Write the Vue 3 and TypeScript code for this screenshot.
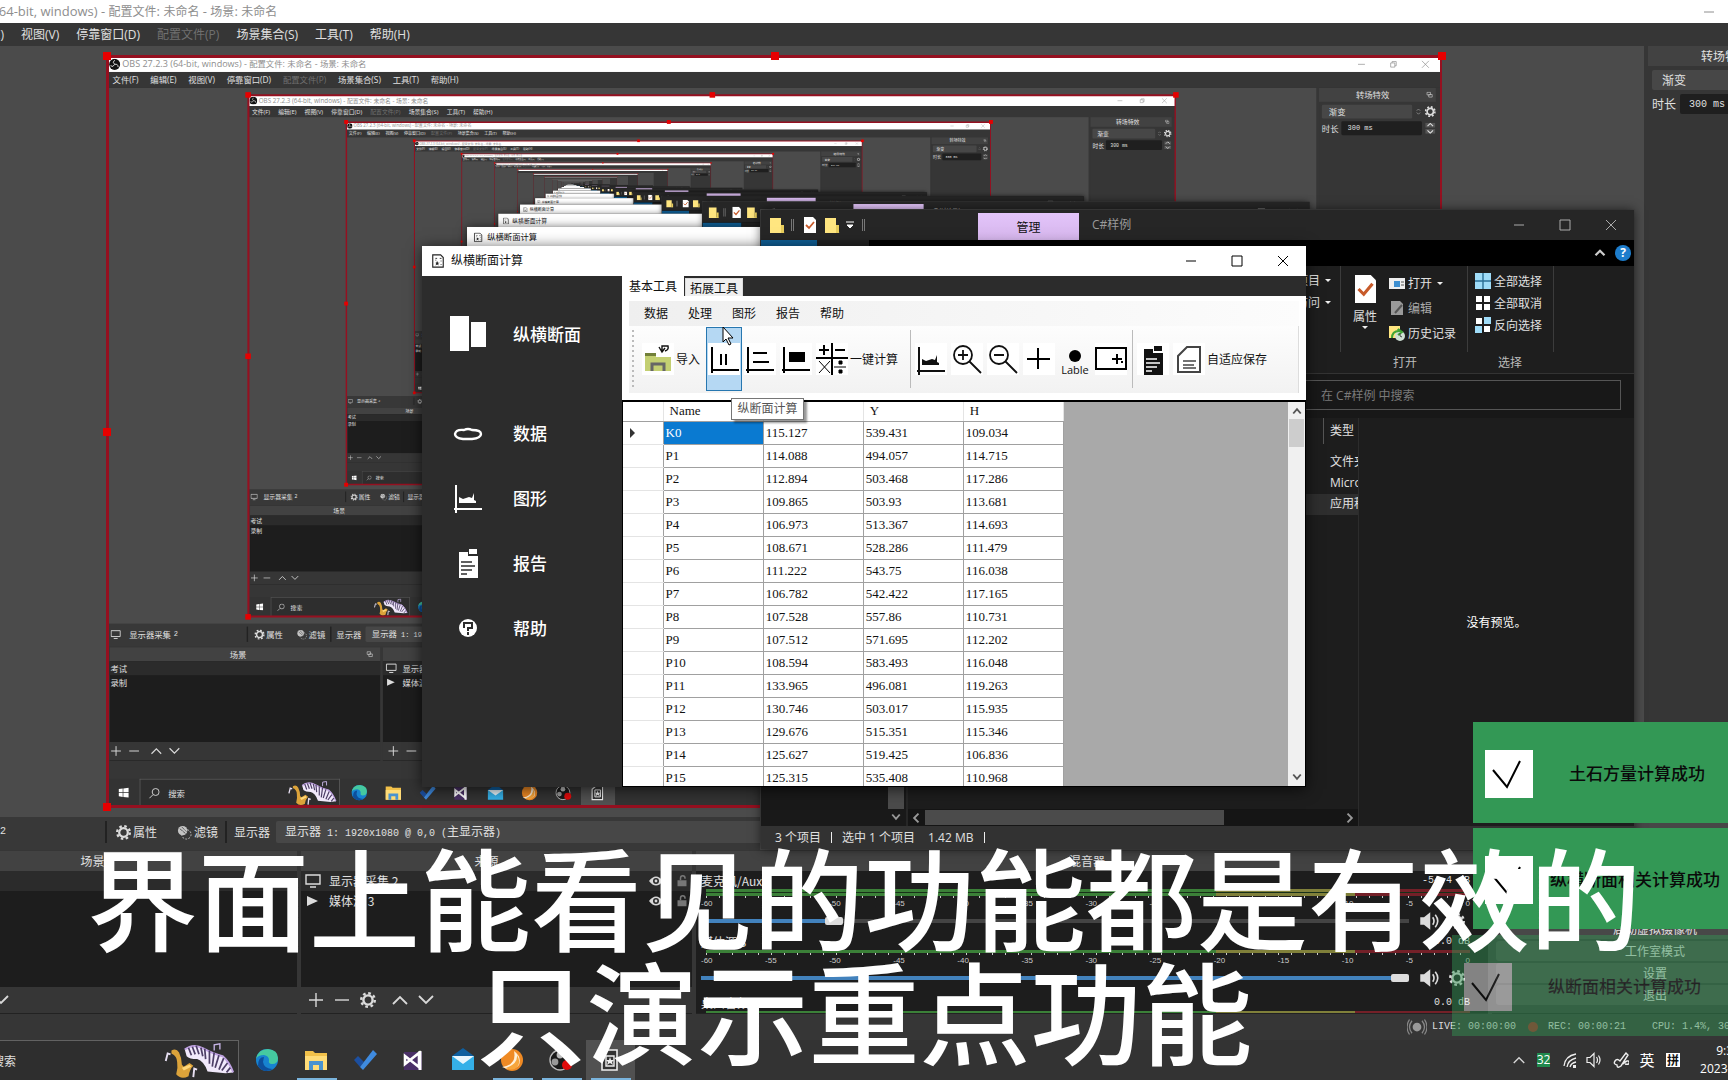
<script setup lang="ts">
import { computed } from 'vue'

const props = withDefaults(defineProps<{ depth?: number }>(), { depth: 0 })
const MAX_DEPTH = 13
// below this depth the captured screens are too small to carry captions
const TEXT_DEPTH = 7
const live = computed(() => props.depth === 0)
const legible = computed(() => props.depth < TEXT_DEPTH)

const menus = ['文件(F)', '编辑(E)', '视图(V)', '停靠窗口(D)', '配置文件(P)', '场景集合(S)', '工具(T)', '帮助(H)']
const points: string[][] = [
  ['K0', '115.127', '539.431', '109.034'],
  ['P1', '114.088', '494.057', '114.715'],
  ['P2', '112.894', '503.468', '117.286'],
  ['P3', '109.865', '503.93', '113.681'],
  ['P4', '106.973', '513.367', '114.693'],
  ['P5', '108.671', '528.286', '111.479'],
  ['P6', '111.222', '543.75', '116.038'],
  ['P7', '106.782', '542.422', '117.165'],
  ['P8', '107.528', '557.86', '110.731'],
  ['P9', '107.512', '571.695', '112.202'],
  ['P10', '108.594', '583.493', '116.048'],
  ['P11', '133.965', '496.081', '119.263'],
  ['P12', '130.746', '503.017', '115.935'],
  ['P13', '129.676', '515.351', '115.346'],
  ['P14', '125.627', '519.425', '106.836'],
  ['P15', '125.315', '535.408', '110.968'],
]
const scale = ['-60', '-55', '-50', '-45', '-40', '-35', '-30', '-25', '-20', '-15', '-10', '-5', '0']
const mixers = [
  { name: '麦克风/Aux', db: '-54.4 dB', value: 18, twin: true },
  { name: '媒体源 3', db: '0.0 dB', value: 100, twin: false },
  { name: '桌面音频', db: '0.0 dB', value: 100, twin: false },
]
const handles = ['tl', 'tc', 'tr', 'ml', 'mr', 'bl', 'bc', 'br']

const chartArt = '<path d="M4 4v28M2 28h28" stroke="currentColor" stroke-width="2"/><path d="M7 22v-6l4 2 6-2 3 1 2-5v7l2 1v2z" fill="currentColor"/>'
const clipArt = '<path d="M7 6h9v4h10v22H7z" fill="currentColor"/><path d="M17 3h8v5h-8z" fill="currentColor"/>'
const art: Record<string, string> = {
  gear: '<g fill="none" stroke="#dcdcdc"><circle cx="8" cy="8" r="4.6" stroke-width="2.4"/><circle cx="8" cy="8" r="6.8" stroke-width="2.4" stroke-dasharray="2.67 2.67"/></g>',
  monitor: '<path d="M1 2h14v9H1zM5 14h6" fill="none" stroke="#dcdcdc" stroke-width="1.4"/>',
  play: '<path d="M2 3l11 5-11 5z" fill="#dcdcdc"/>',
  filter: '<circle cx="6" cy="6" r="5" fill="#c4c4c4"/><path d="M3 4l6 5M5 2l5 5" stroke="#555"/><circle cx="10" cy="10" r="5" fill="none" stroke="#c4c4c4" stroke-dasharray="2 1.4"/>',
  plus: '<path d="M8 1v14M1 8h14" stroke="#d8d8d8" stroke-width="1.4"/>',
  minus: '<path d="M1 8h14" stroke="#d8d8d8" stroke-width="1.4"/>',
  up: '<path d="M1 12l7-7 7 7" fill="none" stroke="#d8d8d8" stroke-width="1.8"/>',
  down: '<path d="M1 4l7 7 7-7" fill="none" stroke="#d8d8d8" stroke-width="1.8"/>',
  eye: '<path d="M1 8q7-9 14 0q-7 9-14 0z" fill="#d8d8d8"/><circle cx="8" cy="8" r="3" fill="#2b2b2b"/><circle cx="8" cy="8" r="1.4" fill="#d8d8d8"/>',
  lock: '<path d="M2 7h12v8H2z" fill="#777"/><path d="M6 7V4q0-3 3-3t3 3v1" fill="none" stroke="#777" stroke-width="2"/>',
  speaker: '<path d="M1 5h3l5-4v14l-5-4H1z" fill="#dcdcdc"/><path d="M11 5q2 3 0 6M13 3q4 5 0 10" fill="none" stroke="#dcdcdc" stroke-width="1.3"/>',
  volume: '<path d="M1 5.500h3l4-4v13l-4-4H1z" fill="none" stroke="#eee" stroke-width="1.2"/><path d="M10.500 5q2 3 0 6M12.500 3.500q3 4.500 0 9" fill="none" stroke="#eee" stroke-width="1.2"/>',
  popout: '<path d="M2 2h8v6H2zM6 7h8v6H6z" fill="#404040" stroke="#ccc" stroke-width="1.5"/>',
  cast: '<circle cx="8" cy="8" r="3.5" fill="#999"/><path d="M4 3q-4 5 0 10M12 3q4 5 0 10M2 2q-4 6 0 12M14 2q4 6 0 12" fill="none" stroke="#888"/>',
  edge: '<circle cx="12" cy="12" r="11" fill="#1783d0"/><path d="M1 11Q3 1 13 1q10 1 10 9 0 6-6 6-4 0-3-4 0-4-5-5-6 0-8 4z" fill="#45c9a0"/><path d="M8 14q1 7 10 7-10 5-15-3Q3 9 9 9z" fill="#0d4f9c"/>',
  folder: '<path d="M1 3h8l2 2h12v17H1z" fill="#f2c14a"/><path d="M1 8h22v14H1z" fill="#ffdc78"/><path d="M5 22v-9h14v9h-4v-5H9v5z" fill="#4a93cf"/>',
  todo: '<path d="M1 12l4-4 6 6-4 5z" fill="#1c4fa0"/><path d="M7 19L20 2l4 4L10 22z" fill="#3f8be0"/>',
  vs: '<path d="M2 4h18v18H2z" fill="#5c2d91" opacity=".55"/><path d="M3 8l14 11V5L3 16z" fill="none" stroke="#fff" stroke-width="2.6"/><path d="M18 3v19" stroke="#fff" stroke-width="3"/>',
  mail: '<path d="M1 8L12 0l11 8z" fill="#0f5f9f"/><path d="M1 8h22v14H1z" fill="#35b0e8"/><path d="M1 8l11 8 11-8z" fill="#e9f6fd"/>',
  ball: '<circle cx="12" cy="12" r="11" fill="#ef8a24"/><path d="M2 19Q17 17 14 3q8 6 5 14-6 7-17 2z" fill="#fff0d8"/><path d="M6 20q12-4 11-13 5 8-1 13-5 3-10 0z" fill="#f7a63c"/>',
  obs: '<circle cx="11" cy="12" r="10" fill="#1a1a1a" stroke="#bbb" stroke-width="1.4"/><circle cx="11" cy="7" r="3.4" fill="#bbb"/><circle cx="6" cy="14" r="3.4" fill="#999"/><circle cx="18" cy="17" r="5" fill="#e00b0b"/>',
  calc: '<path d="M4 7l6-5h9v20H4z" fill="#333" stroke="#eee" stroke-width="1.6"/><path d="M8 8h8v10H8z" fill="none" stroke="#eee" stroke-width="1.4"/><path d="M12 9l1 3h3l-2 2 1 3-3-2-3 2 1-3-2-2h3z" fill="#eee"/>',
  winlogo: '<path d="M1 3l6-1v6H1zM8 2l8-1v7H8zM1 9h6v6l-6-1zM8 9h8v7l-8-1z" fill="#fff"/>',
  search: '<circle cx="10" cy="6" r="5" fill="none" stroke="#ddd" stroke-width="1.3"/><path d="M6 10l-5 5" stroke="#ddd" stroke-width="1.3"/>',
  import: '<path d="M3 10h11v4h15v14H3z" fill="#c3cf72"/><path d="M3 10h11v3H3z" fill="#72803a"/><path d="M10 28v-7h12v7" fill="none" stroke="#666" stroke-width="3"/><path d="M17 4l3 5 3-4M20 8V3h6q1 4-3 5" fill="none" stroke="#111" stroke-width="1.4"/>',
  vert: '<path d="M4 4v26M3 27h28" stroke="#000" stroke-width="2"/><path d="M13 11v11M18 11v11" stroke="#000" stroke-width="2"/>',
  horiz: '<path d="M4 4v26M2 27h28" stroke="#000" stroke-width="2"/><path d="M9 10h14M9 19h16" stroke="#000" stroke-width="2"/>',
  block: '<path d="M4 4v26M2 27h28" stroke="#000" stroke-width="2"/><path d="M9 9h16v10H9z" fill="#000"/>',
  ops: '<path d="M16 0v32M0 15h32M8 2v10M3 7h10M19 7h10" stroke="#000" stroke-width="2"/><path d="M3 18l11 12M14 18L3 30" stroke="#000"/><path d="M18 24h12M23 18h3v3h-3zM23 27h3v3h-3z" stroke="#000" fill="#000"/>',
  chart: chartArt,
  zin: '<circle cx="12" cy="12" r="9" fill="none" stroke="#111" stroke-width="1.8"/><path d="M18 18l12 12M12 7v10M7 12h10" stroke="#111" stroke-width="1.8"/>',
  zout: '<circle cx="12" cy="12" r="9" fill="none" stroke="#111" stroke-width="1.8"/><path d="M18 18l12 12M7 12h10" stroke="#111" stroke-width="1.8"/>',
  cross: '<path d="M15 5v21M4 16h23" stroke="#000" stroke-width="2"/>',
  card: '<path d="M1 5h30v21H1z" fill="#fff" stroke="#000" stroke-width="2"/><path d="M22 11v10M17 16h10" stroke="#000" stroke-width="2"/><path d="M26 18h2v2h-2z"/>',
  clip: clipArt + '<path d="M9 16h11M9 20h14M9 24h11M9 28h6" stroke="#fff" stroke-width="1.6"/>',
  doc: '<path d="M5 29V13l9-9h13v25z" fill="#fff" stroke="#444" stroke-width="2"/><path d="M10 18h13M10 22h11M10 25h13" stroke="#444" stroke-width="1.6"/>',
  sidebook: '<path d="M0 0h19v35H0zM21 6h15v25H21z" fill="#fff"/>',
  sidedata: '<path d="M3 18q1-5 9-4 4-2 8 0 9 0 9 4t-9 5H11q-8-1-8-5z" fill="none" stroke="#fff" stroke-width="2.4"/>',
  sidehelp: '<circle cx="16" cy="17" r="9" fill="#fff"/><path d="M12 17v-5h8v5h-4v3M16 21v3" fill="none" stroke="#2c2c2c" stroke-width="2"/>',
  sideclip: clipArt + '<path d="M9 16h11M9 20h14M9 24h11M9 28h6" stroke="#2c2c2c" stroke-width="1.6"/>',
  check: '<path d="M8 20l14 17L35 11" fill="none" stroke="#000" stroke-width="2"/>',
  yfolder: '<path d="M1 1h11v14l4 1H1z" fill="#ffe680"/><path d="M12 8h3v8h-3z" fill="#e8cd5c"/>',
  pagecheck: '<path d="M2 0h9l3 3v13H2z" fill="#fff"/><path d="M4 8l3 3 5-6" fill="none" stroke="#c75a2a" stroke-width="1.8"/>',
  openwin: '<path d="M0 3h16v11H0z" fill="#eee"/><path d="M5 6h6v6H5z" fill="#3e8fd0"/><path d="M12 7h3M12 10h3" stroke="#555"/>',
  edit: '<path d="M2 1h9l3 3v11H2z" fill="#9a9a9a"/><path d="M6 13l7-8" stroke="#555" stroke-width="2"/>',
  history: '<path d="M0 1h11v12H0z" fill="#ffe680"/><circle cx="11" cy="11" r="5" fill="#cfe0d4"/><path d="M3 13q0-7 7-7l-1-2 4 3-4 3" fill="none" stroke="#3fa535" stroke-width="2"/><path d="M11 8v3l2 1" stroke="#444" fill="none"/>',
  selall: '<path d="M0 0h16v16H0z" fill="#9fdcf8"/><path d="M8 0v16M0 8h16" stroke="#2b6f95" stroke-width="1.4"/>',
  selnone: '<path d="M1 1h6v6H1zM9 1h6v6H9zM1 9h6v6H1zM9 9h6v6H9z" fill="#fff"/>',
  selinv: '<path d="M1 1h6v6H1zM9 9h6v6H9z" fill="#fff"/><path d="M9 0h7v7H9zM0 9h7v7H0z" fill="#9fdcf8"/>',
  wifi: '<path d="M3 14Q4 4 15 2M6 15q1-7 9-9M9 15q1-4 6-5" fill="none" stroke="#eee" stroke-width="1.3"/><path d="M12 13h3v3h-3z" fill="#eee"/>',
  pen: '<path d="M4 13q-4-1-2-4t5 0l6-8 2 2-7 11q-4 3-4-1zM10 12q5-5 6-2t-4 2" fill="none" stroke="#eee" stroke-width="1.4"/>',
  file: '<path d="M2 1h9l3 3v11H2z" fill="#fff" stroke="#222" stroke-width="1.3"/><path d="M5 5h2M10 5h2M5 7h1M11 8h1M11 12h1" stroke="#222"/><path d="M7 8l1 2h2l-2 1 1 2-2-1-2 1 1-2-1-1h1z" fill="#222"/>',
  music: '<path d="M8 9q5-3 8 2 3 6 3 13l2 2 6-4 4 3q-4 4-5 11-8 4-13-2 2-7 1-13 0-6-6-9z" fill="#dca33a"/><path d="M19 27l8-3 2 2-8 4z" fill="#ffd77a"/><path d="M2 20l2-8 3 1M31 37l1-9 3 1" fill="none" stroke="#e7dff2" stroke-width="2"/><path d="M22 8q9-7 20-1t20 8q7 6 11 17l-8 1-19-2q-4-11-11-13-8 0-11-3z" fill="#f1e9fb"/><path d="M22 8q9-7 20-1t20 8q7 6 11 17" fill="none" stroke="#c0a3e2" stroke-width="2"/><path d="M26 6l3 8M30 5l3 8M34 4l3 9M39 6l2 9M43 7l1 11M48 9l0 14M53 11l-2 15M58 14l-4 13M63 17l-5 12M67 22l-6 8M70 27l-4 5" stroke="#4d3f66" stroke-width="1.8"/><path d="M53 9V3l6-1v6" fill="none" stroke="#c7b4e6" stroke-width="1.4"/>',
}
const apps = [
  { icon: 'edge', name: 'Edge', on: false },
  { icon: 'folder', name: '资源管理器', on: true },
  { icon: 'todo', name: 'To Do', on: false },
  { icon: 'vs', name: 'Visual Studio', on: false },
  { icon: 'mail', name: '邮件', on: false },
  { icon: 'ball', name: '浏览器', on: true },
  { icon: 'obs', name: 'OBS', on: true },
  { icon: 'calc', name: '纵横断面计算', on: true },
]
const sideItems = [
  { icon: 'sidedata', label: '数据' },
  { icon: 'chart', label: '图形' },
  { icon: 'sideclip', label: '报告' },
  { icon: 'sidehelp', label: '帮助' },
]
</script>

<template>
  <div :class="live ? 'viewport' : 'nested'">
    <div class="desktop">
      <header class="obs-title">
        <svg class="i16" viewBox="0 0 16 16"><circle cx="8" cy="8" r="8" fill="#111" /><path d="M8 8q-4-3 0-6M8 8q5-1 5 4M8 8q-2 5-6 2" fill="none" stroke="#ddd" stroke-width="1.4" /></svg>
        <div v-if="legible" class="caption">OBS 27.2.3 (64-bit, windows) - <span>配置文件</span>: <span>未命名</span> - <span>场景</span>: <span>未命名</span></div>
        <div class="winctl">
          <button aria-label="最小化"><svg viewBox="0 0 10 10"><path d="M0 5h10" /></svg></button>
          <button aria-label="还原"><svg viewBox="0 0 10 10"><path d="M1 3h6v6H1zM3 3V1h6v6H7" /></svg></button>
          <button aria-label="关闭"><svg viewBox="0 0 10 10"><path d="M0 0l10 10M10 0L0 10" /></svg></button>
        </div>
      </header>
      <nav class="obs-menu">
        <template v-if="legible"><button v-for="m in menus" :key="m" :disabled="m === '配置文件(P)'">{{ m }}</button></template>
      </nav>

      <section class="stage">
        <div class="preview">
          <div class="capture">
            <App v-if="depth < MAX_DEPTH" :depth="depth + 1" />
            <div class="frame"><i v-for="h in handles" :key="h" :class="h"></i></div>
          </div>
        </div>
        <aside class="transitions">
          <template v-if="legible">
            <div class="dock-head"><span>转场特效</span><svg class="i10" viewBox="0 0 16 16" v-html="art.popout"></svg></div>
            <div class="trow"><select aria-label="转场"><option>渐变</option></select><svg class="i10" viewBox="0 0 16 16"><path d="M4 6l4-4 4 4M4 10l4 4 4-4" fill="none" stroke="#aaa" stroke-width="1.5" /></svg><svg class="i16" viewBox="0 0 16 16" v-html="art.gear"></svg></div>
            <label class="trow">时长<input type="text" value="300 ms" /><svg class="i16" viewBox="0 0 16 16"><path d="M1 0h14v7H1zM1 9h14v7H1z" fill="#555" /><path d="M4 5l4-4 4 4M4 11l4 4 4-4" fill="none" stroke="#ddd" stroke-width="1.6" /></svg></label>
          </template>
        </aside>
      </section>

      <section class="source-bar">
        <template v-if="legible">
          <div class="source-name"><svg class="i16" viewBox="0 0 16 16" v-html="art.monitor"></svg>显示器采集 <span class="mono">2</span></div>
          <div class="source-tools">
            <button><svg class="i16" viewBox="0 0 16 16" v-html="art.gear"></svg>属性</button>
            <button><svg class="i16" viewBox="0 0 16 16" v-html="art.filter"></svg>滤镜</button>
          </div>
          <span class="disp">显示器</span>
          <button class="combo">显示器<span class="mono">&nbsp;1: 1920x1080 @ 0,0 (</span>主显示器<span class="mono">)</span></button>
        </template>
      </section>

      <section class="docks">
        <template v-if="legible">
          <div class="dock">
            <div class="dock-head"><span>场景</span><svg class="i10" viewBox="0 0 16 16" v-html="art.popout"></svg></div>
            <ul class="list bare"><li>考试</li><li>录制</li></ul>
            <div class="tools flush">
              <button v-for="t in ['plus', 'minus', 'up', 'down']" :key="t" :aria-label="t"><svg class="i16" viewBox="0 0 16 16" v-html="art[t]"></svg></button>
            </div>
          </div>
          <div class="dock">
            <div class="dock-head"><span>来源</span><svg class="i10" viewBox="0 0 16 16" v-html="art.popout"></svg></div>
            <ul class="list">
              <li><svg class="i16" viewBox="0 0 16 16" v-html="art.monitor"></svg>显示器采集 2<span class="flags"><svg class="i16" viewBox="0 0 16 16" v-html="art.eye"></svg><svg class="i12" viewBox="0 0 16 16" v-html="art.lock"></svg></span></li>
              <li><svg class="i16" viewBox="0 0 16 16" v-html="art.play"></svg>媒体源 3<span class="flags"><svg class="i16" viewBox="0 0 16 16" v-html="art.eye"></svg><svg class="i12" viewBox="0 0 16 16" v-html="art.lock"></svg></span></li>
            </ul>
            <div class="tools">
              <button v-for="t in ['plus', 'minus', 'gear', 'up', 'down']" :key="t" :aria-label="t"><svg class="i16" viewBox="0 0 16 16" v-html="art[t]"></svg></button>
            </div>
          </div>
        </template>
        <div v-if="live" class="dock">
          <div class="dock-head"><span>混音器</span></div>
          <div class="mixers">
            <div v-for="m in mixers" :key="m.name" class="mixer" :class="{ twin: m.twin }">
              <div class="mlabel"><span>{{ m.name }}</span><span class="mono">{{ m.db }}</span></div>
              <div class="meter"></div>
              <div class="scale"><span v-for="s in scale" :key="s">{{ s }}</span></div>
              <div class="fader">
                <input type="range" min="0" max="100" :value="m.value" :aria-label="m.name" :style="{ '--v': m.value + '%' }" />
                <svg class="i20" viewBox="0 0 16 16" v-html="art.speaker"></svg>
                <svg class="i16" viewBox="0 0 16 16" v-html="art.gear"></svg>
              </div>
            </div>
          </div>
        </div>
        <div v-if="live" class="dock controls">
          <div class="dock-head"></div>
          <div class="ctl">
            <button>启动虚拟摄像机</button>
            <button>工作室模式</button>
            <button>设置</button>
            <button>退出</button>
          </div>
        </div>
      </section>

      <footer class="status mono">
        <template v-if="live">
          <svg class="i20" viewBox="0 0 16 16" v-html="art.cast"></svg><span>LIVE: 00:00:00</span>
          <i class="rec"></i><span>REC: 00:00:21</span><span class="cpu">CPU: 1.4%, 30.00 fps</span>
        </template>
      </footer>

      <div class="taskbar">
        <template v-if="legible">
          <button class="start" aria-label="开始"><svg class="i16" viewBox="0 0 17 17" v-html="art.winlogo"></svg></button>
          <div class="search"><svg class="i16" viewBox="0 0 16 16" v-html="art.search"></svg><span>搜索</span><svg class="music" viewBox="0 0 74 40" v-html="art.music"></svg></div>
          <div class="apps">
            <button v-for="a in apps" :key="a.name" :class="{ on: a.on, focus: a.icon === 'calc' }" :aria-label="a.name"><svg viewBox="0 0 24 24" v-html="art[a.icon]"></svg></button>
          </div>
        </template>
        <div v-if="live" class="tray">
          <span class="c24"><svg class="i12" viewBox="0 0 16 16" v-html="art.up"></svg></span>
          <span class="c24"><b class="temp">32</b></span>
          <span class="c24"><svg class="i16" viewBox="0 0 16 16" v-html="art.wifi"></svg></span>
          <span class="c24"><svg class="i16" viewBox="0 0 16 16" v-html="art.volume"></svg></span>
          <span class="c30"><svg class="i16" viewBox="0 0 16 16" v-html="art.pen"></svg></span>
          <span class="c24 ime">英</span>
          <span class="c30"><b class="pin">拼</b></span>
          <span class="clock"><span>9:30</span><span>2023-3-12</span></span>
        </div>
      </div>

      <!-- file explorer -->
      <section class="explorer">
        <header class="ex-title">
          <svg class="i16" viewBox="0 0 16 16" v-html="art.yfolder"></svg><i class="bar"></i>
          <svg class="i16" viewBox="0 0 16 16" v-html="art.pagecheck"></svg>
          <svg class="i16" viewBox="0 0 16 16" v-html="art.yfolder"></svg>
          <svg class="i8" viewBox="0 0 8 8"><path d="M0 1h8M1 4l3 3 3-3z" fill="#fff" stroke="#fff" /></svg><i class="bar"></i>
          <button class="manage"><template v-if="live">管理</template></button>
          <span v-if="depth < 3" class="ex-name">C#样例</span>
          <div class="winctl dark">
            <button aria-label="最小化"><svg viewBox="0 0 10 10"><path d="M0 5h10" /></svg></button>
            <button aria-label="最大化"><svg viewBox="0 0 10 10"><path d="M0 0h10v10H0z" /></svg></button>
            <button aria-label="关闭"><svg viewBox="0 0 10 10"><path d="M0 0l10 10M10 0L0 10" /></svg></button>
          </div>
        </header>
        <div class="ex-tabs"><i class="t-file"></i><i class="t-home"></i>
          <svg v-if="live" class="i12" viewBox="0 0 16 16"><path d="M2 11l6-6 6 6" fill="none" stroke="#ccc" stroke-width="3" /></svg>
          <button v-if="live" class="help">?</button>
        </div>
        <template v-if="live">
          <div class="ribbon">
            <div class="rg rg-new"><button>新建项目<em></em></button><button>轻松访问<em></em></button></div>
            <div class="rg rg-open">
              <div class="rg-body">
                <button class="prop"><svg viewBox="2 0 12 16" v-html="art.pagecheck"></svg>属性<em></em></button>
                <div class="stack">
                  <button><svg class="i16" viewBox="0 0 16 16" v-html="art.openwin"></svg>打开<em></em></button>
                  <button class="dim"><svg class="i16" viewBox="0 0 16 16" v-html="art.edit"></svg>编辑</button>
                  <button><svg class="i16" viewBox="0 0 16 16" v-html="art.history"></svg>历史记录</button>
                </div>
              </div>
              <span class="rg-name">打开</span>
            </div>
            <div class="rg rg-sel">
              <div class="stack tight">
                <button><svg class="i16" viewBox="0 0 16 16" v-html="art.selall"></svg>全部选择</button>
                <button><svg class="i16" viewBox="0 0 16 16" v-html="art.selnone"></svg>全部取消</button>
                <button><svg class="i16" viewBox="0 0 16 16" v-html="art.selinv"></svg>反向选择</button>
              </div>
              <span class="rg-name">选择</span>
            </div>
          </div>
          <div class="ex-addr"><input type="text" placeholder="在 C#样例 中搜索" aria-label="搜索" /></div>
          <div class="ex-body">
            <div class="ex-nav"><div class="vthumb"></div><svg class="i10" viewBox="0 0 16 16"><path d="M2 4l6 7 6-7" fill="none" stroke="#999" stroke-width="3" /></svg></div>
            <div class="ex-list">
              <div class="type-col">
                <div class="th">类型</div>
                <div class="td">文件夹</div>
                <div class="td">Microsoft</div>
                <div class="td sel">应用程序</div>
              </div>
              <div class="hscroll">
                <svg class="i10" viewBox="0 0 16 16"><path d="M12 1L5 8l7 7" fill="none" stroke="#999" stroke-width="3" /></svg>
                <div class="hthumb"></div>
                <svg class="i10" viewBox="0 0 16 16"><path d="M4 1l7 7-7 7" fill="none" stroke="#999" stroke-width="3" /></svg>
              </div>
            </div>
            <div class="ex-preview">没有预览。</div>
          </div>
          <footer class="ex-status"><span>3 个项目</span><i></i><span>选中 1 个项目</span><span>1.42 MB</span><i></i></footer>
        </template>
      </section>

      <!-- cross-section tool -->
      <section class="tool">
        <header class="tool-title">
          <svg class="i14" viewBox="0 0 16 16" v-html="art.file"></svg><span v-if="legible">纵横断面计算</span>
          <div v-if="live" class="winctl black">
            <button aria-label="最小化"><svg viewBox="0 0 10 10"><path d="M0 5h10" /></svg></button>
            <button aria-label="最大化"><svg viewBox="0 0 10 10"><path d="M0 0h10v10H0z" /></svg></button>
            <button aria-label="关闭"><svg viewBox="0 0 10 10"><path d="M0 0l10 10M10 0L0 10" /></svg></button>
          </div>
        </header>
        <div v-if="live" class="tool-body">
          <nav class="side">
            <button class="brand"><svg viewBox="0 0 36 36" v-html="art.sidebook"></svg>纵横断面</button>
            <button v-for="s in sideItems" :key="s.label"><svg viewBox="0 0 32 34" v-html="art[s.icon]"></svg>{{ s.label }}</button>
          </nav>
          <div class="work">
            <div class="tabs"><button class="active">基本工具</button><button>拓展工具</button></div>
            <div class="panel">
              <div class="strip-menu"><button v-for="m in ['数据', '处理', '图形', '报告', '帮助']" :key="m">{{ m }}</button></div>
              <div class="strip">
                <i class="grip"></i>
                <button class="wide"><svg class="i32" viewBox="0 0 32 32" v-html="art.import"></svg>导入</button>
                <button class="hot" aria-label="纵断面计算"><svg class="i32" viewBox="0 0 32 32" v-html="art.vert"></svg></button>
                <button aria-label="横断面计算"><svg class="i32" viewBox="0 0 32 32" v-html="art.horiz"></svg></button>
                <button aria-label="土石方计算"><svg class="i32" viewBox="0 0 32 32" v-html="art.block"></svg></button>
                <button class="wide calc"><svg class="i32" viewBox="0 0 32 32" v-html="art.ops"></svg>一键计算</button>
                <i class="vsep"></i>
                <button v-for="t in ['chart', 'zin', 'zout', 'cross']" :key="t" :aria-label="t"><svg class="i32" viewBox="0 0 32 32" v-html="art[t]"></svg></button>
                <button class="lable"><i></i>Lable</button>
                <button aria-label="card"><svg class="i32" viewBox="0 0 32 32" v-html="art.card"></svg></button>
                <i class="vsep"></i>
                <button aria-label="报告"><svg class="i32" viewBox="0 0 32 32" v-html="art.clip"></svg></button>
                <button class="wide"><svg class="i32" viewBox="0 0 32 32" v-html="art.doc"></svg>自适应保存</button>
              </div>
            </div>
            <div class="gridbox">
              <div class="gridscroll">
                <table>
                  <thead><tr><th></th><th>Name</th><th>X</th><th>Y</th><th>H</th></tr></thead>
                  <tbody>
                    <tr v-for="(p, i) in points" :key="p[0]">
                      <th><span v-if="i === 0" class="rowmark"></span></th>
                      <td v-for="(c, j) in p" :key="j" :class="{ picked: i === 0 && j === 0 }">{{ c }}</td>
                    </tr>
                  </tbody>
                </table>
              </div>
              <div class="vscroll">
                <svg class="i10" viewBox="0 0 16 16"><path d="M2 12l6-7 6 7" fill="none" stroke="#555" stroke-width="3" /></svg>
                <div></div>
                <svg class="i10" viewBox="0 0 16 16"><path d="M2 4l6 7 6-7" fill="none" stroke="#555" stroke-width="3" /></svg>
              </div>
            </div>
          </div>
          <div class="tip">纵断面计算</div>
          <svg class="cursor" viewBox="0 0 12 20"><path d="M1 1v15l3-3 3 6 2-1-3-6h5z" fill="#fff" stroke="#000" /></svg>
        </div>
      </section>

      <template v-if="live">
        <div class="toast t1"><svg viewBox="0 0 48 48" v-html="art.check"></svg><span>土石方量计算成功</span></div>
        <div class="toast t2"><svg viewBox="0 0 48 48" v-html="art.check"></svg><span>纵横断面相关计算成功</span></div>
        <div class="toast t3"><svg viewBox="0 0 48 48" v-html="art.check"></svg><span>纵断面相关计算成功</span></div>
        <div class="subtitle"><p>界面上能看见的功能都是有效的</p><p>只演示重点功能</p></div>
      </template>
    </div>
  </div>
</template>

<style>
body { background: #363636; }
</style>

<style scoped>
* { box-sizing: border-box; }
button { font: inherit; color: inherit; background: none; border: 0; padding: 0; margin: 0; }
svg { flex: none; display: block; }
i, em { font-style: normal; flex: none; }
.viewport { width: 100%; height: 100vh; overflow: hidden; }
.viewport > .desktop { width: calc(100% + 192px); height: 100%; margin-left: -96px; }
.nested { width: 1920px; height: 1080px; transform: scale(0.695); transform-origin: 0 0; overflow: hidden; }
.nested > .desktop { width: 100%; height: 100%; }
.desktop {
  position: relative; display: grid; overflow: hidden;
  grid-template-rows: 23px 23px minmax(0, 1fr) 33px 164px 26px 40px;
  font: 12px/16px "Noto Sans CJK SC", sans-serif; color: #e0e0e0; background: #363636;
}
.mono { font-family: "Liberation Mono", monospace; font-size: 10px; }
.i8 { width: 8px; height: 8px; }
.i10 { width: 10px; height: 10px; }
.i12 { width: 12px; height: 12px; }
.i14 { width: 14px; height: 14px; }
.i16 { width: 16px; height: 16px; }
.i20 { width: 20px; height: 20px; }
.i32 { width: 32px; height: 32px; }

.obs-title { display: flex; align-items: center; background: #fff; color: #8e8e8e; padding-left: 3px; gap: 3px; font-family: "Open Sans", "Noto Sans CJK SC", sans-serif; white-space: nowrap; }
.caption { font-size: 13px; }
.caption span { font-size: 12px; }
.winctl { display: flex; margin-left: auto; align-self: stretch; }
.winctl button { width: 46px; display: grid; place-items: center; }
.winctl svg { width: 10px; height: 10px; fill: none; stroke: #8e8e8e; overflow: visible; }
.winctl.black svg { stroke: #000; }
.winctl.dark svg { stroke: #aaa; }
.obs-menu { display: flex; align-items: center; gap: 17px; padding-left: 8px; background: #363636; font-family: "Open Sans", "Noto Sans CJK SC", sans-serif; }
.obs-menu button { white-space: nowrap; }
.obs-menu button:disabled { color: #707070; }

.stage { display: grid; grid-template-columns: minmax(0, 1fr) 176px; gap: 4px; }
.preview { background: #4b4b4b; display: flex; align-items: center; justify-content: center; overflow: hidden; }
.capture { position: relative; width: 1334px; height: 751px; flex: none; }
.capture > .nested { position: absolute; left: 0; top: 0; }
.frame { position: absolute; inset: -1px; border: 3px solid #951020; border-right-width: 2px; }
.frame i { position: absolute; width: 8px; height: 8px; background: #e60000; }
.tl, .tc, .tr { top: -6px; }
.bl, .bc, .br { bottom: -6px; }
.ml, .mr { top: calc(50% - 4px); }
.tl, .ml, .bl { left: -6px; }
.tc, .bc { left: calc(50% - 4px); }
.tr, .mr, .br { right: -6px; }

.dock-head { display: flex; align-items: center; height: 20px; background: #424242; padding-right: 10px; flex: none; }
.dock-head span { flex: 1; text-align: center; }
.transitions { background: #363636; padding-right: 8px; }
.transitions .dock-head { padding-right: 4px; }
.trow { display: flex; align-items: center; height: 20px; margin: 4px 0 0 4px; gap: 4px; }
.trow select { flex: 1; height: 20px; appearance: none; border: 0; border-radius: 2px; background: #474747; color: #e0e0e0; font: inherit; padding: 0 10px; }
.trow input { flex: 1; min-width: 0; height: 20px; border: 0; border-radius: 2px; background: #1f1f1f; color: #e0e0e0; font: 10px "Liberation Mono", monospace; padding: 0 9px; }

.source-bar { display: flex; align-items: center; background: #383838; padding-bottom: 3px; }
.source-name { display: flex; align-items: center; width: 201px; padding-left: 5px; gap: 4px; }
.source-tools { display: flex; gap: 20px; border-left: 2px solid #222; border-right: 2px solid #222; height: 22px; padding: 0 12px 0 9px; width: 122px; }
.source-tools button { display: flex; align-items: center; gap: 2px; white-space: nowrap; }
.source-tools svg, .source-name svg { width: 15px; height: 15px; }
.source-name svg { margin-right: 8px; }
.disp { padding: 0 6px 0 7px; }
.combo { flex: 1; height: 22px; background: #474747; border-radius: 2px; padding: 0 9px; text-align: left; margin-right: 8px; }

.docks { display: grid; grid-template-columns: 389px 391px minmax(0, 1fr) 328px; gap: 4px; padding: 1px 4px 0; overflow: hidden; background: #363636; }
.dock { display: flex; flex-direction: column; min-width: 0; min-height: 0; border-bottom: 1px solid #222; }
.list { flex: 1; margin: 0; padding: 0; list-style: none; background: #1d1d1d; }
.list li { display: flex; align-items: center; height: 19px; padding: 0 4px; gap: 8px; }
.list.bare li { padding-left: 1px; }
.list li:first-child { background: #2b2b2b; height: 20px; }
.flags { margin-left: auto; display: flex; gap: 12px; align-items: center; }
.tools { display: flex; gap: 10px; height: 26px; align-items: center; padding-left: 7px; background: #363636; }
.tools.flush { padding-left: 1px; }
.tools button:nth-last-child(2) { margin-left: 6px; }
.mixers { flex: 1; min-height: 0; overflow: hidden; background: #1d1d1d; padding: 2px 18px 0 5px; }
.mixer { height: 61px; }
.mlabel { display: flex; justify-content: space-between; height: 16px; }
.meter { height: 3px; margin-left: 5px; background: linear-gradient(90deg, #3b8038 0 66.7%, #80803a 66.7% 84.9%, #742028 84.9%); }
.twin .meter { height: 7px; background: linear-gradient(transparent 3px, #183018 3px 4px, transparent 4px), linear-gradient(90deg, #3b8038 0 66.7%, #80803a 66.7% 84.9%, #742028 84.9%); }
.scale { display: flex; justify-content: space-between; height: 12px; padding-top: 3px; font: 8px/9px "Liberation Sans", sans-serif; color: #ccc; background: repeating-linear-gradient(90deg, #ccc 0 1px, transparent 1px 13px) 5px 0 / 100% 2px no-repeat; }
.fader { display: flex; align-items: center; height: 20px; margin-top: 3px; gap: 10px; padding-right: 5px; }
.fader input { flex: 1; appearance: none; margin: 0; height: 4px; background: linear-gradient(90deg, #4282bd var(--v), #444 var(--v)); }
.fader input::-webkit-slider-thumb { appearance: none; width: 18px; height: 8px; border-radius: 2px; background: #ddd; }
.ctl { flex: 1; display: flex; flex-direction: column; justify-content: flex-end; gap: 2px; padding: 0 6px 8px 4px; }
.ctl button { height: 20px; background: #484848; border-radius: 3px; line-height: 20px; }
.status { display: flex; align-items: center; justify-content: flex-end; gap: 5px; padding-right: 52px; color: #ddd; }
.rec { width: 10px; height: 10px; border-radius: 50%; background: #a32424; margin: 0 5px 0 7px; }
.cpu { margin-left: 21px; }

.taskbar { display: flex; background: #333; }
.start { width: 47px; display: grid; place-items: center; }
.search { width: 288px; display: flex; align-items: center; border: 1px solid #626262; border-bottom: 0; background: #2e2e2e; padding: 0 2px 0 12px; gap: 12px; }
.music { width: 74px; height: 38px; margin-left: auto; }
.apps { display: flex; padding-left: 4px; }
.apps button { width: 49px; padding: 8px 12px; }
.apps svg { width: 24px; height: 24px; }
.apps .on { background: linear-gradient(#7ab4dd, #7ab4dd) center bottom / 40px 2px no-repeat; }
.apps .focus { background-color: #515151; }
.tray { display: flex; align-items: center; margin-left: auto; padding-right: 56px; color: #fff; }
.tray > span { display: flex; justify-content: center; align-items: center; }
.c24 { width: 25px; }
.c30 { width: 30px; }
.temp { background: #20894d; font: 12px/14px "Open Sans", sans-serif; }
.tray .ime { font-size: 15px; width: 22px; }
.pin { background: #fff; color: #111; font-size: 12px; line-height: 14px; padding: 0 1px; }
.clock { width: 80px; flex-direction: column; line-height: 18px; font-family: "Open Sans", sans-serif; }

.explorer { position: absolute; left: 857px; top: 210px; width: 873px; height: 639px; background: #1d1d1d; display: flex; flex-direction: column; box-shadow: 0 0 10px #0009, 0 0 0 1px #484848; }
.ex-title { display: flex; align-items: center; height: 30px; background: #262626; padding-left: 8px; flex: none; }
.ex-title .bar { width: 3px; height: 12px; border: 1px solid #777; border-width: 0 1px; margin: 0 8px 0 6px; }
.ex-title svg + svg { margin-left: 6px; }
.ex-title .i8 + .bar { margin-left: 8px; }
.manage { width: 101px; height: 27px; align-self: flex-end; background: linear-gradient(#e3c4fa, #d6b6ec); color: #111; margin-left: 105px; }
.ex-name { color: #9a9a9a; margin-left: 13px; font-family: "Open Sans", "Noto Sans CJK SC", sans-serif; }
.ex-tabs { display: flex; align-items: center; height: 26px; background: #000; flex: none; gap: 9px; padding-right: 3px; }
.t-file { width: 56px; align-self: stretch; background: #0f5f96; }
.t-home { width: 52px; align-self: stretch; background: #222; margin-left: -9px; margin-right: auto; }
.help { width: 16px; height: 16px; border-radius: 50%; background: #1d7dcc; color: #fff; font: bold 12px/16px "Open Sans", sans-serif; }
.ribbon { display: flex; height: 108px; background: #1e1e1e; border-bottom: 1px solid #333; flex: none; }
.ribbon button { display: flex; align-items: center; gap: 3px; white-space: nowrap; }
.ribbon em { border: 3px solid transparent; border-top-color: #eee; border-bottom: 0; margin-left: 2px; }
.rg { display: flex; flex-direction: column; border-right: 1px solid #3c3c3c; height: 86px; }
.rg-new { width: 580px; align-items: flex-end; padding: 6px 9px 0 0; gap: 6px; }
.rg-open { width: 127px; padding: 9px 0 0 10px; }
.rg-sel { width: 86px; padding: 7px 0 0 7px; }
.rg-name { text-align: center; margin: auto 0 -18px -8px; color: #bbb; }
.rg-body { display: flex; gap: 10px; }
.ribbon .prop { flex-direction: column; gap: 5px; width: 28px; line-height: 16px; }
.prop svg { width: 21px; height: 28px; }
.ribbon .prop em { margin: -3px 0 0; }
.stack { display: flex; flex-direction: column; gap: 9px; }
.stack.tight { gap: 6px; }
.dim { color: #aaa; }
.ex-addr { height: 44px; padding: 6px 13px 8px 400px; background: #181818; flex: none; }
.ex-addr input { width: 100%; height: 30px; border: 1px solid #555; background: #181818; font: 12px "Open Sans", "Noto Sans CJK SC", sans-serif; padding-left: 159px; color: #ddd; }
.ex-addr input::placeholder { color: #7a7a7a; }
.ex-body { display: flex; flex: 1; min-height: 0; }
.ex-nav { width: 147px; border-right: 2px solid #262626; background: #191919; display: flex; flex-direction: column; align-items: flex-end; padding-right: 5px; }
.vthumb { width: 16px; flex: 1; background: #4b4b4b; margin-right: -3px; margin-bottom: 3px; }
.ex-nav svg { margin-bottom: 4px; }
.ex-list { width: 451px; display: flex; flex-direction: column; border-right: 1px solid #2c2c2c; overflow: hidden; }
.type-col { flex: 1; padding-left: 300px; white-space: nowrap; font-family: "Open Sans", "Noto Sans CJK SC", sans-serif; }
.th { height: 26px; margin: 0 0 8px 115px; padding: 5px 6px; border-left: 1px solid #555; }
.td { height: 21px; line-height: 20px; padding-left: 122px; }
.sel { background: #2e2e2e; }
.hscroll { display: flex; align-items: center; height: 17px; background: #151515; padding: 0 3px; gap: 4px; }
.hthumb { width: 299px; height: 15px; background: #4b4b4b; margin-right: auto; }
.ex-preview { flex: 1; display: grid; place-items: center; color: #fff; }
.ex-status { height: 23px; background: #323232; display: flex; align-items: center; padding-left: 14px; gap: 10px; flex: none; font-family: "Open Sans", "Noto Sans CJK SC", sans-serif; }
.ex-status i { width: 1px; height: 11px; background: #eee; }
.ex-status span + span { margin-left: 3px; }

.tool { position: absolute; left: 518px; top: 246px; width: 884px; height: 541px; background: #2c2c2c; display: flex; flex-direction: column; box-shadow: 0 2px 14px #000a; }
.tool-title { height: 30px; background: #fff; color: #111; display: flex; align-items: center; padding-left: 9px; gap: 6px; flex: none; }
.tool-title span { padding-bottom: 2px; }
.tool-body { position: relative; flex: 1; min-height: 0; display: flex; }
.side { width: 200px; padding-top: 40px; color: #fff; font-size: 17px; font-weight: 500; line-height: 24px; }
.side button { display: flex; align-items: center; height: 34px; margin: 0 0 31px 30px; gap: 29px; }
.side button svg { width: 32px; height: 34px; }
.side .brand { height: 36px; margin-bottom: 64px; margin-left: 28px; gap: 27px; }
.side .brand svg { width: 36px; height: 36px; }
.work { flex: 1; min-width: 0; display: flex; flex-direction: column; color: #111; }
.tabs { display: flex; align-items: flex-end; height: 20px; gap: 1px; }
.tabs button { height: 18px; background: #efefef; padding: 0 4px; line-height: 16px; border: 1px solid #ddd; border-bottom: 0; }
.tabs .active { height: 20px; background: #fff; padding: 0 7px; line-height: 20px; border: 0; }
.panel { background: #fff; height: 104px; padding: 5px 7px 7px; flex: none; }
.strip-menu { display: flex; gap: 20px; height: 25px; padding: 0 0 2px 15px; background: linear-gradient(90deg, #efefef, #fcfcfc); }
.strip { display: flex; align-items: center; height: 67px; padding: 0 0 2px 3px; background: linear-gradient(#fdfdfd, #f2f2f2); border-right: 1px solid #ddd; }
.strip button { width: 36px; height: 64px; display: flex; align-items: center; justify-content: center; flex: none; white-space: nowrap; }
.strip .wide { width: auto; gap: 2px; margin: 0 6px 0 2px; }
.strip .calc { margin-right: 9px; }
.strip .hot { background: #b5d8f3; border: 1px solid #2777b0; }
.strip svg { background: #fff; }
.strip .i32 { width: 32px; height: 32px; }
.grip { width: 2px; height: 58px; background: repeating-linear-gradient(#bbb 0 2px, transparent 2px 5px); margin-right: 6px; }
.vsep { width: 1px; height: 58px; background: #bbb; margin: 0 2px 0 3px; }
.strip .lable { flex-direction: column; font: 11px/12px "Open Sans", sans-serif; padding-top: 2px; }
.lable i { width: 12px; height: 12px; border-radius: 50%; background: #000; margin-top: 6px; margin-bottom: 2px; }
.gridbox { flex: 1; min-height: 0; display: flex; background: #a9a9a9; border: 1px solid #000; border-top-width: 2px; overflow: hidden; }
.gridscroll { flex: 1; min-width: 0; overflow: hidden; }
table { border-collapse: collapse; table-layout: fixed; width: 441px; background: #fff; font: 13px/16px "Liberation Serif", serif; }
th { font-weight: normal; text-align: left; width: 40px; padding: 0; border-bottom: 1px solid #e4e4e4; }
thead th { height: 19px; padding-left: 6px; width: 100px; border-bottom: 1px solid #a0a0a0; border-right: 1px solid #e4e4e4; }
thead th:first-child { width: 40px; }
tbody tr { height: 23px; }
td { padding: 0 2px; border: 1px solid #a0a0a0; height: 23px; }
.picked { background: #0a7ad1; color: #fff; }
.rowmark { display: block; margin-left: 7px; width: 0; border: 5px solid transparent; border-left-color: #333; border-right: 0; }
.vscroll { width: 17px; background: #f0f0f0; display: flex; flex-direction: column; align-items: center; padding: 4px 0; gap: 3px; }
.vscroll div { width: 15px; height: 28px; background: #cdcdcd; margin-bottom: auto; }
.tip { position: absolute; left: 309px; top: 122px; width: 73px; height: 22px; background: #fff; border: 1px solid #767676; color: #555; line-height: 18px; text-align: center; box-shadow: 3px 3px 2px #0006; }
.cursor { position: absolute; left: 300px; top: 50px; width: 12px; height: 20px; }

.toast { position: absolute; right: 0; width: 351px; height: 101px; background: #339855; color: #0a0a0a; display: flex; align-items: center; padding: 3px 0 0 12px; gap: 36px; font: 500 17px/24px "Noto Sans CJK SC", sans-serif; white-space: nowrap; }
.toast svg { width: 48px; height: 48px; background: #fff; }
.toast span { padding-bottom: 3px; }
.t1 { top: 722px; }
.t2 { top: 828px; gap: 17px; }
.t3 { top: 935px; width: 372px; opacity: 0.45; }
.subtitle { position: absolute; left: 96px; right: 96px; bottom: 14px; text-align: center; color: #fff; font-size: 111px; line-height: 114px; font-weight: 500; white-space: nowrap; }
.subtitle p { margin: 0; }
</style>
